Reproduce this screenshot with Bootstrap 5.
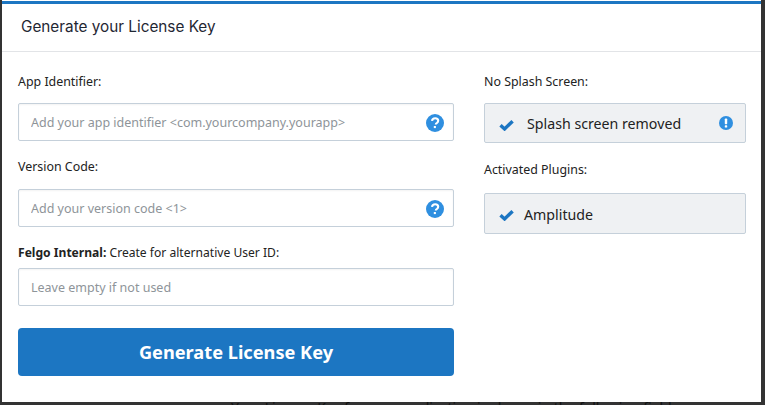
<!DOCTYPE html>
<html lang="en">
<head>
<meta charset="utf-8">
<title>Generate your License Key</title>
<link rel="stylesheet" href="https://cdn.jsdelivr.net/npm/bootstrap@5.3.0/dist/css/bootstrap.min.css">
<style>
html,body{height:100%;overflow:hidden}
body{background:#333;font-family:"Noto Sans","Open Sans",sans-serif;color:#222;padding:0 4px 3px 2px}
.sheet{height:402px;background:#fff;padding-top:1px;overflow:hidden}
.sheet-bar{height:3px;background:#1c76c2}
.sheet-head{height:48px;padding:0 0 0 19px;border-bottom:1px solid #e2e4e7;font-family:Inter,"Noto Sans",sans-serif;font-size:15.3px;color:#1f2733;display:flex;align-items:center;margin-bottom:0;font-weight:400}
.sheet-body{padding:0 15px 0 16px;gap:30px}
.form-side{width:436px;flex:none}
.info-side{width:262px;flex:none}
.fld-label{display:block;font-size:12.4px;line-height:20px;color:#222;margin:0}
.fld-label b{font-weight:700}
.fld-a{margin-top:20px}
.fld-b{margin-top:16px}
.fld-b + .fld-input{margin-top:12px}
.fld-c{margin-top:17px;font-size:12.1px;line-height:18px}
.fld-input{height:38px;border:1px solid #c5d0da;border-radius:2px;margin-top:11px;padding:0 9px 0 12px;box-shadow:inset 0 1px 2px rgba(0,0,0,.05)}
.fld-input.short{margin-top:6px}
.fld-input input{border:0;outline:0;padding:2px 0 0;flex:1;min-width:0;font-size:12.5px;color:#222;background:transparent;font-family:inherit}
.fld-input input::placeholder{color:#8e9499;opacity:1}
.q-icon{width:18px;height:18px;flex:none;display:block;margin-top:2px}
.go-btn{height:48px;margin-top:22px;background:#1c76c2;border:0;border-radius:4px;color:#fff;font-weight:700;font-size:18.2px;line-height:48px;padding:0}
.go-btn:hover{background:#1c76c2;color:#fff}
.stat-box{background:#eff1f3;border:1px solid #c5d0da;border-radius:2px;margin-top:11px;padding:2px 12px 0 14px;font-size:14.2px;color:#222}
.stat-box.one{height:40px}
.stat-box.two{height:41px;margin-top:13px}
.chk{width:15px;height:12px;flex:none;display:block;margin-top:1px}
.side-gap{margin-left:13px}
.side-gap2{margin-left:10px}
.info-b{margin-top:17px;line-height:20px}
.alert-dot{margin-top:-2px}
.below{font-size:14px;color:#111;line-height:12px;padding-left:229px;white-space:nowrap}
</style>
</head>
<body>
<div class="sheet">
  <div class="sheet-bar"></div>
  <h5 class="sheet-head">Generate your License Key</h5>
  <div class="sheet-body d-flex">
    <form class="form-side">
      <label class="fld-label fld-a">App Identifier:</label>
      <div class="fld-input d-flex align-items-center">
        <input type="text" placeholder="Add your app identifier &lt;com.yourcompany.yourapp&gt;">
        <svg class="q-icon" viewBox="0 0 18 18"><circle cx="9" cy="9" r="9" fill="#2f8fe0"/><path d="M6 6.9C6.2 5.2 7.5 4.2 9.2 4.2c1.8 0 3 1.1 3 2.6 0 1.2-.7 1.8-1.5 2.3-.7.4-.9.7-.9 1.4" fill="none" stroke="#fff" stroke-width="2.1"/><rect x="7.8" y="12" width="2.1" height="2.1" fill="#fff"/></svg>
      </div>
      <label class="fld-label fld-b">Version Code:</label>
      <div class="fld-input d-flex align-items-center">
        <input type="text" placeholder="Add your version code &lt;1&gt;">
        <svg class="q-icon" viewBox="0 0 18 18"><circle cx="9" cy="9" r="9" fill="#2f8fe0"/><path d="M6 6.9C6.2 5.2 7.5 4.2 9.2 4.2c1.8 0 3 1.1 3 2.6 0 1.2-.7 1.8-1.5 2.3-.7.4-.9.7-.9 1.4" fill="none" stroke="#fff" stroke-width="2.1"/><rect x="7.8" y="12" width="2.1" height="2.1" fill="#fff"/></svg>
      </div>
      <label class="fld-label fld-c"><b>Felgo Internal:</b> Create for alternative User ID:</label>
      <div class="fld-input short d-flex align-items-center">
        <input type="text" placeholder="Leave empty if not used">
      </div>
      <button type="button" class="btn go-btn w-100">Generate License Key</button>
    </form>
    <div class="info-side">
      <label class="fld-label fld-a">No Splash Screen:</label>
      <div class="stat-box one d-flex align-items-center">
        <svg class="chk" viewBox="0 0 15 12"><path d="M1.5 6.2 5.6 10 13.6 2.2" fill="none" stroke="#1c76c2" stroke-width="3.4"/></svg>
        <span class="side-gap">Splash screen removed</span>
        <svg class="ms-auto alert-dot" width="14" height="14" viewBox="0 0 15 15"><circle cx="7.5" cy="7.5" r="7.5" fill="#2f8fe0"/><rect x="6.2" y="2.8" width="2.6" height="6" rx=".8" fill="#fff"/><rect x="6.2" y="10" width="2.6" height="2.3" rx=".6" fill="#fff"/></svg>
      </div>
      <label class="fld-label info-b">Activated Plugins:</label>
      <div class="stat-box two d-flex align-items-center">
        <svg class="chk" viewBox="0 0 15 12"><path d="M1.5 6.2 5.6 10 13.6 2.2" fill="none" stroke="#1c76c2" stroke-width="3.4"/></svg>
        <span class="side-gap2">Amplitude</span>
      </div>
    </div>
  </div>
</div>
<div class="below">Your License Key for your application is shown in the following field</div>
</body>
</html>
